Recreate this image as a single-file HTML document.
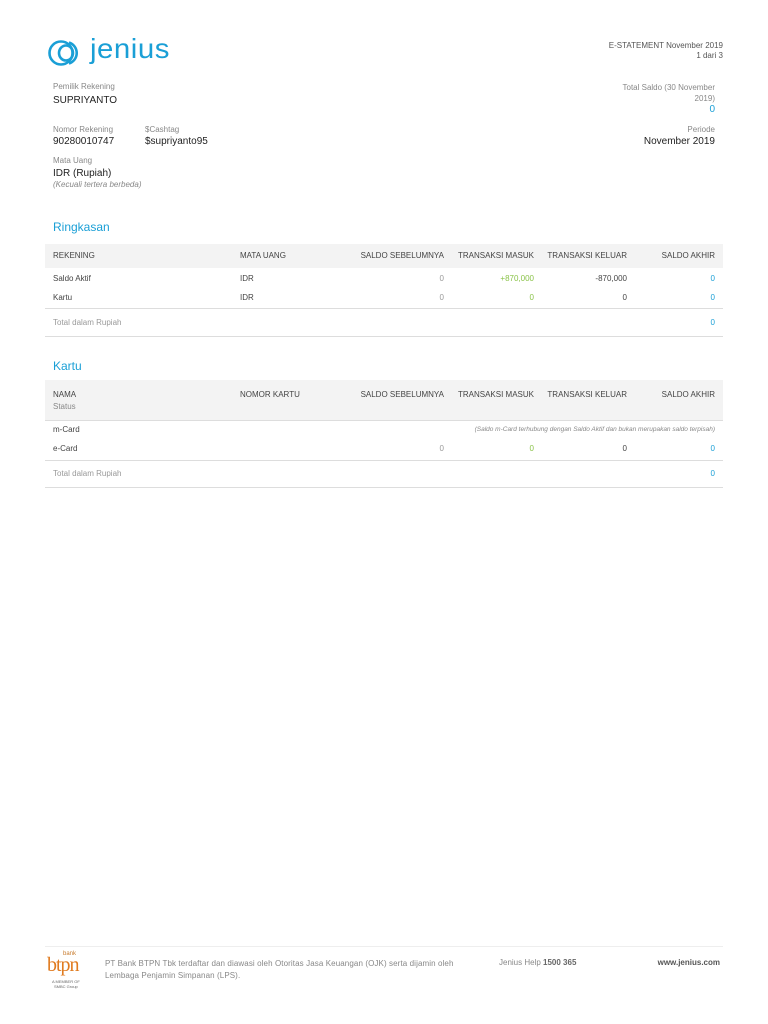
<!DOCTYPE html>
<html><head><meta charset="utf-8"><style>
*{margin:0;padding:0;box-sizing:border-box}
body{width:768px;height:1024px;background:#fff;font-family:"Liberation Sans",sans-serif;color:#333;position:relative;overflow:hidden}
.a{position:absolute;white-space:nowrap}
.l{font-size:8px;color:#888}
.v{font-size:10px;color:#222}
.s{font-size:8px;color:#444}
.b{color:#1a9fd6}
.g{color:#8bc34a}
.r{text-align:right}
.hd{position:absolute;left:45px;width:678px;background:#f3f3f3}
.ln{position:absolute;left:45px;width:678px;height:1px;background:#ddd}
</style></head><body>
<svg class="a" style="left:47px;top:38px" width="38" height="30" viewBox="0 0 38 30">
<ellipse cx="14" cy="15" rx="11.5" ry="11.5" fill="none" stroke="#1a9fd6" stroke-width="2.6"/>
<ellipse cx="19" cy="15" rx="7" ry="7.5" fill="none" stroke="#1a9fd6" stroke-width="2.6"/>
<path d="M22 4.5 A11 11 0 0 1 22 25.5" fill="none" stroke="#1a9fd6" stroke-width="2.6"/>
</svg>
<div class="a b" style="left:90px;top:33px;font-size:28px;letter-spacing:0.5px;transform:scaleX(1.05);transform-origin:left">jenius</div>
<div class="a l r" style="right:45px;top:41px;color:#555">E-STATEMENT November 2019</div>
<div class="a l r" style="right:45px;top:51px;color:#555">1 dari 3</div>
<div class="a l" style="left:53px;top:82px">Pemilik Rekening</div>
<div class="a v" style="left:53px;top:95px">SUPRIYANTO</div>
<div class="a l r" style="right:53px;top:82px;line-height:11px;white-space:normal;width:110px">Total Saldo (30 November 2019)</div>
<div class="a b r" style="right:53px;top:104px;font-size:10px">0</div>
<div class="a l r" style="right:53px;top:125px">Periode</div>
<div class="a v r" style="right:53px;top:136px">November 2019</div>
<div class="a l" style="left:53px;top:125px">Nomor Rekening</div>
<div class="a v" style="left:53px;top:136px">90280010747</div>
<div class="a l" style="left:145px;top:125px">$Cashtag</div>
<div class="a v" style="left:145px;top:136px">$supriyanto95</div>
<div class="a l" style="left:53px;top:156px">Mata Uang</div>
<div class="a v" style="left:53px;top:168px">IDR (Rupiah)</div>
<div class="a l" style="left:53px;top:180px;font-style:italic">(Kecuali tertera berbeda)</div>

<div class="a b" style="left:53px;top:220px;font-size:12px">Ringkasan</div>
<div class="hd" style="top:244px;height:24px"></div>
<div class="a s" style="left:53px;top:251px">REKENING</div>
<div class="a s" style="left:240px;top:251px">MATA UANG</div>
<div class="a s r" style="right:324px;top:251px">SALDO SEBELUMNYA</div>
<div class="a s r" style="right:234px;top:251px">TRANSAKSI MASUK</div>
<div class="a s r" style="right:141px;top:251px">TRANSAKSI KELUAR</div>
<div class="a s r" style="right:53px;top:251px">SALDO AKHIR</div>
<div class="a s" style="left:53px;top:274px">Saldo Aktif</div>
<div class="a s" style="left:240px;top:274px">IDR</div>
<div class="a s r" style="right:324px;top:274px;color:#999">0</div>
<div class="a s r g" style="right:234px;top:274px">+870,000</div>
<div class="a s r" style="right:141px;top:274px">-870,000</div>
<div class="a s r b" style="right:53px;top:274px">0</div>
<div class="a s" style="left:53px;top:293px">Kartu</div>
<div class="a s" style="left:240px;top:293px">IDR</div>
<div class="a s r" style="right:324px;top:293px;color:#999">0</div>
<div class="a s r g" style="right:234px;top:293px">0</div>
<div class="a s r" style="right:141px;top:293px">0</div>
<div class="a s r b" style="right:53px;top:293px">0</div>
<div class="ln" style="top:308px"></div>
<div class="a s" style="left:53px;top:318px;color:#999">Total dalam Rupiah</div>
<div class="a s r b" style="right:53px;top:318px">0</div>
<div class="ln" style="top:336px"></div>

<div class="a b" style="left:53px;top:359px;font-size:12px">Kartu</div>
<div class="hd" style="top:380px;height:40px"></div>
<div class="a s" style="left:53px;top:390px">NAMA</div>
<div class="a s" style="left:53px;top:402px;color:#888">Status</div>
<div class="a s" style="left:240px;top:390px">NOMOR KARTU</div>
<div class="a s r" style="right:324px;top:390px">SALDO SEBELUMNYA</div>
<div class="a s r" style="right:234px;top:390px">TRANSAKSI MASUK</div>
<div class="a s r" style="right:141px;top:390px">TRANSAKSI KELUAR</div>
<div class="a s r" style="right:53px;top:390px">SALDO AKHIR</div>
<div class="ln" style="top:420px"></div>
<div class="a s" style="left:53px;top:425px">m-Card</div>
<div class="a r" style="right:53px;top:426px;font-size:6.5px;font-style:italic;color:#888">(Saldo m-Card terhubung dengan Saldo Aktif dan bukan merupakan saldo terpisah)</div>
<div class="a s" style="left:53px;top:444px">e-Card</div>
<div class="a s r" style="right:324px;top:444px;color:#999">0</div>
<div class="a s r g" style="right:234px;top:444px">0</div>
<div class="a s r" style="right:141px;top:444px">0</div>
<div class="a s r b" style="right:53px;top:444px">0</div>
<div class="ln" style="top:460px"></div>
<div class="a s" style="left:53px;top:469px;color:#999">Total dalam Rupiah</div>
<div class="a s r b" style="right:53px;top:469px">0</div>
<div class="ln" style="top:487px"></div>

<div class="ln" style="top:946px;background:#eee"></div>
<div class="a" style="left:63px;top:951px;font-size:6px;color:#c77a2c">bank</div>
<div class="a" style="left:47px;top:954px;font-size:20px;font-family:'Liberation Serif',serif;color:#e07b20;letter-spacing:-1px">btpn</div>
<div class="a" style="left:52px;top:979px;font-size:4px;color:#666;line-height:5px;text-align:center">A MEMBER OF<br>SMBC Group</div>
<div class="a" style="left:105px;top:958px;font-size:8px;color:#888;line-height:12px;letter-spacing:0.1px">PT Bank BTPN Tbk terdaftar dan diawasi oleh Otoritas Jasa Keuangan (OJK) serta dijamin oleh<br>Lembaga Penjamin Simpanan (LPS).</div>
<div class="a" style="left:499px;top:958px;font-size:8px;color:#888">Jenius Help <b style="color:#666">1500 365</b></div>
<div class="a r" style="right:48px;top:958px;font-size:8px;color:#555;font-weight:bold">www.jenius.com</div>
</body></html>
